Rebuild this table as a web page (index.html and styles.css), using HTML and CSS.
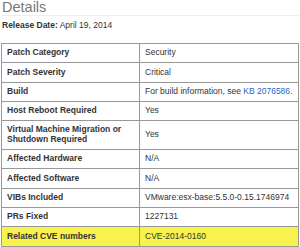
FILE: index.html
```html
<!DOCTYPE html>
<html lang="en">
<head>
    <meta charset="UTF-8">
    <title>Patch Details</title>
    <link rel="stylesheet" href="styles.css">
</head>
<body>
    <div class="details">
        <h2 class="details-title">Details</h2>
        <p class="release"><strong>Release Date:</strong> April 19, 2014</p>

        <table class="patch-table">
            <tbody>
                <tr>
                    <th>Patch Category</th>
                    <td>Security</td>
                </tr>
                <tr>
                    <th>Patch Severity</th>
                    <td>Critical</td>
                </tr>
                <tr>
                    <th>Build</th>
                    <td>For build information, see <a href="#">KB 2076586</a>.</td>
                </tr>
                <tr>
                    <th>Host Reboot Required</th>
                    <td>Yes</td>
                </tr>
                <tr>
                    <th>Virtual Machine Migration or Shutdown Required</th>
                    <td>Yes</td>
                </tr>
                <tr>
                    <th>Affected Hardware</th>
                    <td>N/A</td>
                </tr>
                <tr>
                    <th>Affected Software</th>
                    <td>N/A</td>
                </tr>
                <tr>
                    <th>VIBs Included</th>
                    <td>VMware:esx-base:5.5.0-0.15.1746974</td>
                </tr>
                <tr>
                    <th>PRs Fixed</th>
                    <td>1227131</td>
                </tr>
                <tr class="highlight">
                    <th>Related CVE numbers</th>
                    <td>CVE-2014-0160</td>
                </tr>
            </tbody>
        </table>
    </div>
</body>
</html>
```

FILE: styles.css
```css
* {
    margin: 0;
    padding: 0;
    box-sizing: border-box;
}

body {
    font-family: 'Liberation Sans', Arial, sans-serif;
    background: white;
    color: #333;
}

.details {
    padding: 0 1px;
}

.details-title {
    font-size: 14.5px;
    font-weight: normal;
    color: #777;
    line-height: 15px;
    padding-left: 1px;
    border-bottom: 1px solid #eee;
}

.release {
    font-size: 8.5px;
    line-height: 10px;
    padding: 4px 0 0 1px;
    height: 27px;
}

.release strong {
    color: #333;
}

.patch-table {
    width: 298px;
    border-collapse: collapse;
    font-size: 8.5px;
    line-height: 9.7px;
    table-layout: fixed;
}

.patch-table th,
.patch-table td {
    border: 1px solid #999;
    padding: 4.3px 4px 4.3px 5px;
    text-align: left;
    vertical-align: middle;
}

.patch-table th {
    width: 138px;
    font-weight: bold;
    color: #333;
}

.patch-table td {
    color: #333;
}

.patch-table a {
    color: #2a62c9;
    text-decoration: none;
}

.patch-table .highlight th,
.patch-table .highlight td {
    background: #f7f24c;
}
```
